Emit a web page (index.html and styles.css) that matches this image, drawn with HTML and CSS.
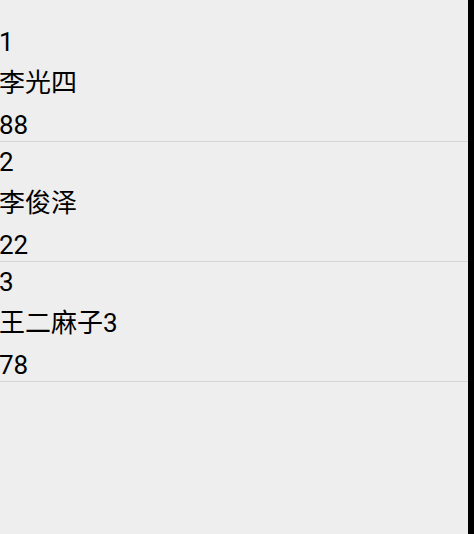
FILE: index.html
```html
<!DOCTYPE html>
<html lang="zh">
<head>
<meta charset="utf-8">
<title>List</title>
<link rel="stylesheet" href="styles.css">
</head>
<body>
<div class="screen">
  <div class="list">
    <div class="row">
      <div class="cell">1</div>
      <div class="cell">李光四</div>
      <div class="cell">88</div>
    </div>
    <div class="row">
      <div class="cell">2</div>
      <div class="cell">李俊泽</div>
      <div class="cell">22</div>
    </div>
    <div class="row">
      <div class="cell">3</div>
      <div class="cell">王二麻子3</div>
      <div class="cell">78</div>
    </div>
  </div>
  <div class="edge"></div>
</div>
</body>
</html>
```

FILE: styles.css
```css
html, body {
  margin: 0;
  padding: 0;
  height: 100%;
  overflow: hidden;
}

body {
  background: #eeeeee;
  font-family: Roboto, "Noto Sans CJK SC", sans-serif;
  color: #000000;
}

.screen {
  display: flex;
  height: 534px;
}

.list {
  flex: 1;
  padding-top: 22px;
  overflow: hidden;
}

.edge {
  width: 6px;
  background: #000000;
  flex: none;
}

.row {
  display: flex;
  flex-direction: column;
  gap: 13.5px;
  padding: 5.5px 0 2.5px 0;
  border-bottom: 1px solid #d6d6d6;
}

.cell {
  font-size: 26px;
  line-height: 28px;
  height: 28px;
  margin-left: -1px;
  white-space: nowrap;
}
```
